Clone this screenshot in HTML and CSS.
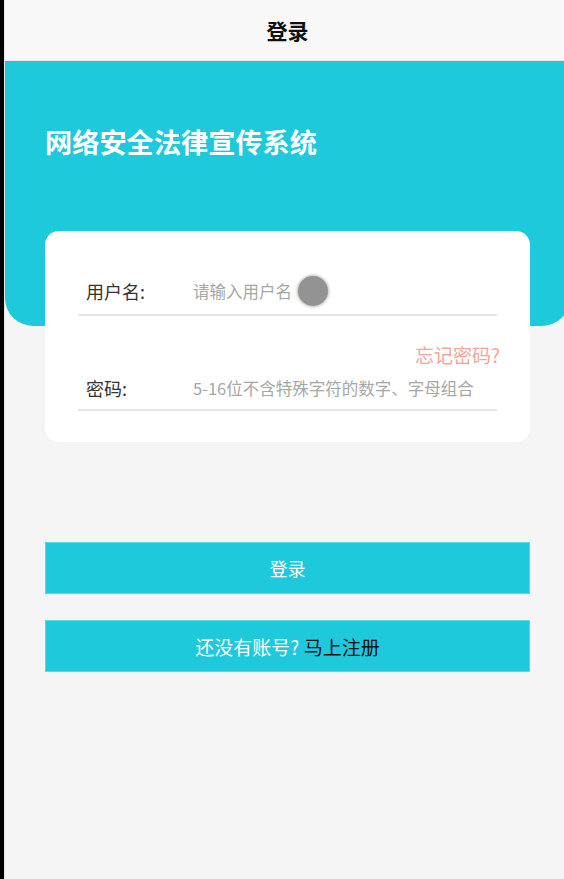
FILE: index.html
```html
<html>
    <head>
        <title>登录</title>
        <link rel="stylesheet" href="styles.css">
    </head>
    <body>
        <div class="page">
            <header class="nav">登录</header>
            <div class="banner">
                <h2>网络安全法律宣传系统</h2>
            </div>
            <div class="card">
                <div class="row">
                    <span class="label">用户名:</span>
                    <span class="hint">请输入用户名</span>
                    <span class="touch"></span>
                </div>
                <div class="forget">忘记密码?</div>
                <div class="row">
                    <span class="label">密码:</span>
                    <span class="hint">5-16位不含特殊字符的数字、字母组合</span>
                </div>
            </div>
            <button class="btn login">登录</button>
            <button class="btn reg">还没有账号? <span class="dark">马上注册</span></button>
        </div>
    </body>
</html>
```

FILE: styles.css
```css
body{
    margin: 0;
    border-left: 4px solid black;
    background: #f5f5f5;
    overflow: hidden;
    font-family: "Noto Sans CJK SC", "Noto Sans", sans-serif;
}
.page{
    width: 565px;
    min-height: 879px;
    border-left: 1px solid #e6e6e6;
}
.nav{
    height: 60px;
    line-height: 60px;
    text-align: center;
    font-size: 21px;
    font-weight: bold;
    color: #111;
    background: #f8f8f8;
    border-bottom: 1px solid #ececec;
}
.banner{
    height: 265px;
    background: #1fc9dc;
    border-radius: 0 0 28px 28px;
    padding: 0 40px;
    overflow: hidden;
}
.banner h2{
    margin: 60px 0 0;
    color: white;
    font-size: 27.2px;
    font-weight: bold;
    line-height: 40px;
}
.card{
    position: relative;
    margin: -95px 40px 0;
    background: white;
    border-radius: 14px;
    padding: 37px 33px 31px;
}
.row{
    position: relative;
    display: flex;
    align-items: center;
    height: 46px;
    padding-left: 8px;
    border-bottom: 2px solid #e6e6e6;
}
.label{
    width: 107px;
    font-size: 18px;
    color: #333;
}
.hint{
    font-size: 16.5px;
    color: #a6a6a6;
}
.touch{
    width: 30px;
    height: 30px;
    margin-left: 6px;
    border-radius: 50%;
    background: #939393;
    box-shadow: 0 0 3px 1px #bdbdbd;
}
.forget{
    text-align: right;
    margin: 28px -3px 0 0;
    font-size: 19px;
    color: #f4a49a;
    line-height: 22px;
}
.forget + .row{
    height: 43px;
}
.btn{
    display: block;
    width: 485px;
    height: 52px;
    margin: 100px 40px 0;
    border: 1px solid #55dbe8;
    background: #1fc9dc;
    color: white;
    font-size: 18px;
    font-family: "Noto Sans CJK SC", "Noto Sans", sans-serif;
}
.reg{
    margin-top: 26px;
    font-size: 19px;
}
.dark{
    color: #111;
}
```
